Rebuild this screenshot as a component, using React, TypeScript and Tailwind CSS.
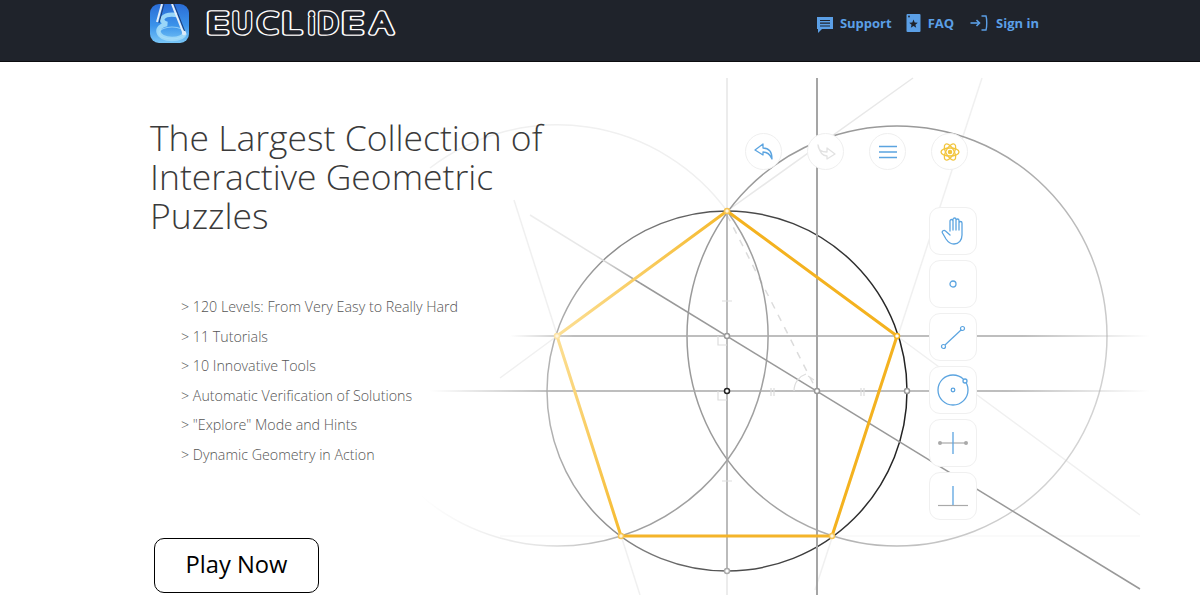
const features = [
  "> 120 Levels: From Very Easy to Really Hard",
  "> 11 Tutorials",
  "> 10 Innovative Tools",
  "> Automatic Verification of Solutions",
  '> "Explore" Mode and Hints',
  "> Dynamic Geometry in Action",
];

const logoLetters = [
  { ch: "E", x: 1.1, sx: 1.4 },
  { ch: "U", x: 26.4, sx: 1.0 },
  { ch: "C", x: 51.6, sx: 1.18 },
  { ch: "L", x: 76.3, sx: 1.32 },
  { ch: "i", x: 102.6, sx: 1.0 },
  { ch: "D", x: 112.1, sx: 1.05 },
  { ch: "E", x: 136.1, sx: 1.4 },
  { ch: "A", x: 165.5, sx: 1.25 },
];

function AppIcon() {
  return (
    <svg width="40" height="44" viewBox="0 0 40 44" className="shrink-0">
      <defs>
        <linearGradient id="appBg" x1="0" y1="0" x2="0" y2="1">
          <stop offset="0" stopColor="#2a6cd6" />
          <stop offset="0.55" stopColor="#3b93ea" />
          <stop offset="1" stopColor="#78c6f7" />
        </linearGradient>
        <clipPath id="appClip">
          <rect x="0" y="4" width="39" height="39" rx="9" />
        </clipPath>
      </defs>
      <g clipPath="url(#appClip)">
        <rect x="0" y="4" width="39" height="39" fill="url(#appBg)" />
        <path d="M27 15 C12 13 8 21 17 24 C4 26 6 39 22 39 C30 39 34 36 35 33" fill="none" stroke="#9ad6f8" strokeWidth="4.5" />
        <ellipse cx="22" cy="33" rx="13" ry="6" fill="none" stroke="#a9def9" strokeWidth="1.2" opacity="0.7" />
        <path d="M12 4 L7 22" stroke="#e6eff8" strokeWidth="2" />
        <path d="M22 4 L33 32" stroke="#e6eff8" strokeWidth="2" />
        <path d="M14 4 L9 23" stroke="#1c3a74" strokeWidth="1" />
        <path d="M24 4 L35 32" stroke="#1c3a74" strokeWidth="1" />
        <circle cx="34" cy="33" r="2.2" fill="#dceaf8" />
      </g>
    </svg>
  );
}

function Wordmark() {
  const layer = (stroke: string, width: number) =>
    logoLetters.map((l, i) => (
      <text
        key={i}
        transform={`translate(${l.x} 33) scale(${l.sx} 1)`}
        fontFamily="'Open Sans', sans-serif"
        fontWeight="300"
        fontSize="27"
        fill="none"
        stroke={stroke}
        strokeWidth={width}
        strokeLinejoin="round"
        strokeLinecap="round"
      >
        {l.ch}
      </text>
    ));
  return (
    <svg width="192" height="44" viewBox="0 0 192 44" className="ml-4 shrink-0">
      {layer("#ffffff", 5.6)}
      {layer("#1f232b", 2.9)}
    </svg>
  );
}

function SupportIcon() {
  return (
    <svg width="18" height="18" viewBox="0 0 18 18" className="mt-[3px]">
      <path d="M1 1 H17 V13 H6 L2 17 V13 H1 Z" fill="#5b9fe6" />
      <path d="M4 4.5 H14 M4 7.2 H14 M4 10 H14" stroke="#1f232b" strokeWidth="1.2" />
    </svg>
  );
}

function FaqIcon() {
  return (
    <svg width="15" height="20" viewBox="0 0 15 20">
      <rect x="0.5" y="1" width="14" height="18" rx="1" fill="#5b9fe6" />
      <path d="M7.5 6.5 L8.7 9.6 L11.8 9.8 L9.4 11.8 L10.2 14.8 L7.5 13.1 L4.8 14.8 L5.6 11.8 L3.2 9.8 L6.3 9.6 Z" fill="#1f232b" />
      <circle cx="3" cy="3.5" r="0.9" fill="#1f232b" />
    </svg>
  );
}

function SignInIcon() {
  return (
    <svg width="18" height="16" viewBox="0 0 18 16" fill="none" stroke="#5b9fe6">
      <path d="M0.5 8 H9" strokeWidth="1.6" />
      <path d="M6.5 5 L9.5 8 L6.5 11" strokeWidth="1.6" />
      <path d="M11.5 1 H16 C17 4 17 12 16 15 H11.5" strokeWidth="1.4" />
    </svg>
  );
}

function Diagram() {
  return (
    <svg width="1200" height="595" viewBox="0 0 1200 595" fill="none" className="absolute left-0 top-0">
      <defs>
        <linearGradient id="hLine" gradientUnits="userSpaceOnUse" x1="430" y1="0" x2="1150" y2="0">
          <stop offset="0" stopColor="#a8a8a8" stopOpacity="0" />
          <stop offset="0.17" stopColor="#a8a8a8" />
          <stop offset="0.8" stopColor="#a8a8a8" />
          <stop offset="1" stopColor="#a8a8a8" stopOpacity="0" />
        </linearGradient>
        <linearGradient id="hLineTop" gradientUnits="userSpaceOnUse" x1="510" y1="0" x2="1150" y2="0">
          <stop offset="0" stopColor="#a8a8a8" stopOpacity="0" />
          <stop offset="0.1" stopColor="#a8a8a8" />
          <stop offset="0.8" stopColor="#a8a8a8" />
          <stop offset="1" stopColor="#a8a8a8" stopOpacity="0" />
        </linearGradient>
        <linearGradient id="mainRing" gradientUnits="userSpaceOnUse" x1="547" y1="0" x2="907" y2="0">
          <stop offset="0" stopColor="#b4b4b4" />
          <stop offset="0.45" stopColor="#555555" />
          <stop offset="1" stopColor="#222222" />
        </linearGradient>
        <linearGradient id="leftFade" gradientUnits="userSpaceOnUse" x1="420" y1="0" x2="620" y2="0">
          <stop offset="0" stopColor="#e4e4e4" stopOpacity="0" />
          <stop offset="0.6" stopColor="#e4e4e4" />
          <stop offset="1" stopColor="#b0b0b0" />
        </linearGradient>
        <linearGradient id="rightRing" gradientUnits="userSpaceOnUse" x1="850" y1="300" x2="1100" y2="450">
          <stop offset="0" stopColor="#9a9a9a" />
          <stop offset="1" stopColor="#d8d8d8" />
        </linearGradient>
        <linearGradient id="diag" gradientUnits="userSpaceOnUse" x1="530" y1="215" x2="640" y2="283">
          <stop offset="0" stopColor="#eeeeee" />
          <stop offset="0.6" stopColor="#e4e4e4" />
          <stop offset="1" stopColor="#999999" />
        </linearGradient>
        <linearGradient id="penA" gradientUnits="userSpaceOnUse" x1="557" y1="336" x2="727" y2="211">
          <stop offset="0" stopColor="#fcdf95" />
          <stop offset="1" stopColor="#f5b92c" />
        </linearGradient>
        <linearGradient id="penB" gradientUnits="userSpaceOnUse" x1="557" y1="336" x2="621" y2="536">
          <stop offset="0" stopColor="#fcdf95" />
          <stop offset="1" stopColor="#f6bb30" />
        </linearGradient>
      </defs>

      {/* faint construction lines */}
      <g stroke="#f0f0f0" strokeWidth="1.5">
        <path d="M982 78 L815 590" />
        <path d="M913 78 L727 211" stroke="#e8e8e8" />
        <path d="M514 200 L640 595" />
        <path d="M897 336 L1140 515" />
        <path d="M727 78 V211 M727 571 V595" stroke="#e6e6e6" />
        <path d="M557 336 L500 378" />
        <path d="M500 536 H1140" stroke="#f8f8f8" />
      </g>

      <path d="M727 215 L817 391" stroke="#dcdcdc" strokeWidth="1.5" strokeDasharray="7 7" />

      {/* left circle: barely there outside the main circle */}
      <path d="M727 211 A210 210 0 0 0 430 168" stroke="#f0f0f0" strokeWidth="1.5" />
      <path d="M621 536 A210 210 0 0 1 420 495" stroke="url(#leftFade)" strokeWidth="1.5" />
      <path d="M727 211 A210 210 0 0 1 621 536" stroke="#a0a0a0" strokeWidth="1.5" />
      <circle cx="897" cy="336" r="210" stroke="url(#rightRing)" strokeWidth="1.5" />
      <circle cx="727" cy="391" r="180" stroke="url(#mainRing)" strokeWidth="1.5" />

      <path d="M510 336 H1150" stroke="url(#hLineTop)" strokeWidth="1.5" />
      <path d="M430 391 H1150" stroke="url(#hLine)" strokeWidth="1.5" />
      <path d="M727 211 V571" stroke="#a5a5a5" strokeWidth="1.5" />
      <path d="M817 78 V595" stroke="#a5a5a5" strokeWidth="2" />
      <path d="M530 215 L640 283" stroke="url(#diag)" strokeWidth="1.5" />
      <path d="M640 283 L1140 589" stroke="#999999" strokeWidth="1.5" />

      {/* little marks */}
      <g stroke="#dddddd" strokeWidth="1.2">
        <path d="M722 301 H732 M722 481 H732" />
        <path d="M718 336 V345 H727 M718 391 V400 H727" />
        <path d="M771 388 V396 M774 388 V396 M861 388 V396 M864 388 V396" />
        <path d="M794 391 C794 382 800 376 806 374" />
        <path d="M808 376 L814 380" />
      </g>

      <g strokeWidth="3" strokeLinecap="round">
        <path d="M727 211 L557 336" stroke="url(#penA)" />
        <path d="M557 336 L621 536" stroke="url(#penB)" />
        <path d="M621 536 H832" stroke="#f4b42a" />
        <path d="M832 536 L897 336 L727 211" stroke="#f4b21f" strokeLinejoin="round" />
      </g>

      <g fill="#ffffff" strokeWidth="1.5">
        <circle cx="727" cy="211" r="2.5" stroke="#f6c556" fill="#fff6dd" />
        <circle cx="897" cy="336" r="2.5" stroke="#f4b21f" />
        <circle cx="832" cy="536" r="2.5" stroke="#f6c556" fill="#fff6dd" />
        <circle cx="621" cy="536" r="2.5" stroke="#f6c556" fill="#fff6dd" />
        <circle cx="557" cy="336" r="2.5" stroke="#fce3a6" fill="#fff6dd" />
        <circle cx="727" cy="336" r="2.5" stroke="#999999" />
        <circle cx="727" cy="391" r="2.5" stroke="#222222" />
        <circle cx="817" cy="391" r="2.5" stroke="#999999" />
        <circle cx="907" cy="391" r="2.5" stroke="#999999" />
        <circle cx="727" cy="571" r="2.5" stroke="#aaaaaa" />
      </g>
    </svg>
  );
}

const blue = "#5ba4e0";

function RoundButton({ children }: { children: React.ReactNode }) {
  return (
    <div className="flex h-[37px] w-[37px] items-center justify-center rounded-full border border-[#efefef] bg-white">
      {children}
    </div>
  );
}

function ToolButton({ children }: { children: React.ReactNode }) {
  return (
    <div className="flex h-[48px] w-[48px] items-center justify-center rounded-[11px] border border-[#f0f0f0] bg-white">
      {children}
    </div>
  );
}

export default function App() {
  return (
    <div className="relative h-[595px] w-[1200px] overflow-hidden bg-white font-['Open_Sans',sans-serif]">
      <header className="flex h-[62px] items-start justify-between border-b border-[#0c0d10] bg-[#1f232b] pl-[150px] pr-[161px]">
        <div className="flex items-start">
          <AppIcon />
          <Wordmark />
        </div>
        <nav className="flex items-center gap-[16px] pt-[12px] text-[13px] leading-[22px] font-bold text-[#5b9fe6]">
          <a className="mr-[-2px] flex items-center gap-[6px]"><SupportIcon />Support</a>
          <a className="flex items-center gap-[7px]"><FaqIcon />FAQ</a>
          <a className="flex items-center gap-[8px]"><SignInIcon />Sign in</a>
        </nav>
      </header>

      <Diagram />

      <main className="relative pl-[150px]">
        <h1 className="mt-[56px] w-[410px] text-[35.5px] leading-[39px] font-light text-[#3a3a3a]">
          The Largest Collection of Interactive Geometric Puzzles
        </h1>
        <ul className="mt-[57px] pl-[31px] text-[14.25px] leading-[29.6px] font-light text-[#555555]">
          {features.map((item) => (
            <li key={item}>{item}</li>
          ))}
        </ul>
        <button className="ml-[4px] mt-[68px] flex h-[55px] w-[165px] items-center justify-center rounded-[10px] border-[1.5px] border-black bg-white text-[23.7px] text-black">
          Play Now
        </button>
      </main>

      <div className="absolute left-[745px] top-[133px] flex gap-[25px]">
        <RoundButton>
          <svg width="20" height="18" viewBox="0 0 20 18" fill="none" stroke={blue} strokeWidth="1.3" strokeLinejoin="round">
            <path d="M9 1 L1 7 L9 12 V9 C13 9 16 11 18 16 C18 9 15 5 9 5 Z" />
          </svg>
        </RoundButton>
        <RoundButton>
          <svg width="20" height="18" viewBox="0 0 20 18" fill="none" stroke="#e2e2e2" strokeWidth="1.3" strokeLinejoin="round">
            <path d="M11 5 L19 11 L11 16 V13 C7 13 4 11 2 2 C2 7 5 9 11 9 Z" />
          </svg>
        </RoundButton>
        <RoundButton>
          <svg width="20" height="14" viewBox="0 0 20 14" stroke={blue} strokeWidth="1.3">
            <path d="M1 1.5 H19 M1 7 H19 M1 12.5 H19" />
          </svg>
        </RoundButton>
        <RoundButton>
          <svg width="20" height="20" viewBox="0 0 20 20" fill="none" stroke="#f2c53d" strokeWidth="1.3">
            <ellipse cx="10" cy="10" rx="9" ry="4" />
            <ellipse cx="10" cy="10" rx="9" ry="4" transform="rotate(60 10 10)" />
            <ellipse cx="10" cy="10" rx="9" ry="4" transform="rotate(120 10 10)" />
            <circle cx="10" cy="10" r="1.6" fill="#f2c53d" />
          </svg>
        </RoundButton>
      </div>

      <div className="absolute left-[929px] top-[207px] flex flex-col gap-[5px]">
        <ToolButton>
          <svg width="24" height="28" viewBox="0 0 24 28" fill="none" stroke={blue} strokeWidth="1.3" strokeLinecap="round" strokeLinejoin="round">
            <path d="M9 14 V4 C9 2 12 2 12 4 V13 M12 13 V2.5 C12 0.5 15 0.5 15 2.5 V13 M15 13 V3.5 C15 1.5 18 1.5 18 3.5 V13 M18 13 V6 C18 4 21 4 21 6 V18 C21 23 18 27 13 27 C9 27 7 25 5 22 L1.5 16 C0.5 14 3 12.5 4.5 14 L9 18" />
          </svg>
        </ToolButton>
        <ToolButton>
          <svg width="10" height="10" viewBox="0 0 10 10" fill="none" stroke={blue} strokeWidth="1.3">
            <circle cx="5" cy="5" r="3" />
          </svg>
        </ToolButton>
        <ToolButton>
          <svg width="26" height="26" viewBox="0 0 26 26" fill="none" stroke={blue} strokeWidth="1.2">
            <circle cx="3.5" cy="22.5" r="2" />
            <circle cx="22.5" cy="4.5" r="2" />
            <path d="M5 21 L21 6" />
          </svg>
        </ToolButton>
        <ToolButton>
          <svg width="34" height="34" viewBox="0 0 34 34" fill="none" stroke={blue} strokeWidth="1.3">
            <circle cx="17" cy="17" r="15" />
            <circle cx="17" cy="17" r="1.8" />
            <circle cx="29" cy="8" r="2" fill="#ffffff" />
          </svg>
        </ToolButton>
        <ToolButton>
          <svg width="32" height="32" viewBox="0 0 32 32">
            <path d="M2 16 H30" stroke="#a9a9a9" strokeWidth="1.2" />
            <circle cx="3" cy="16" r="2" fill="#a9a9a9" />
            <circle cx="29" cy="16" r="2" fill="#a9a9a9" />
            <path d="M16 5 V27" stroke={blue} strokeWidth="1.3" />
          </svg>
        </ToolButton>
        <ToolButton>
          <svg width="32" height="32" viewBox="0 0 32 32">
            <path d="M1 25.5 H31" stroke="#a9a9a9" strokeWidth="1.2" />
            <path d="M16 6 V25" stroke={blue} strokeWidth="1.3" />
          </svg>
        </ToolButton>
      </div>
    </div>
  );
}
